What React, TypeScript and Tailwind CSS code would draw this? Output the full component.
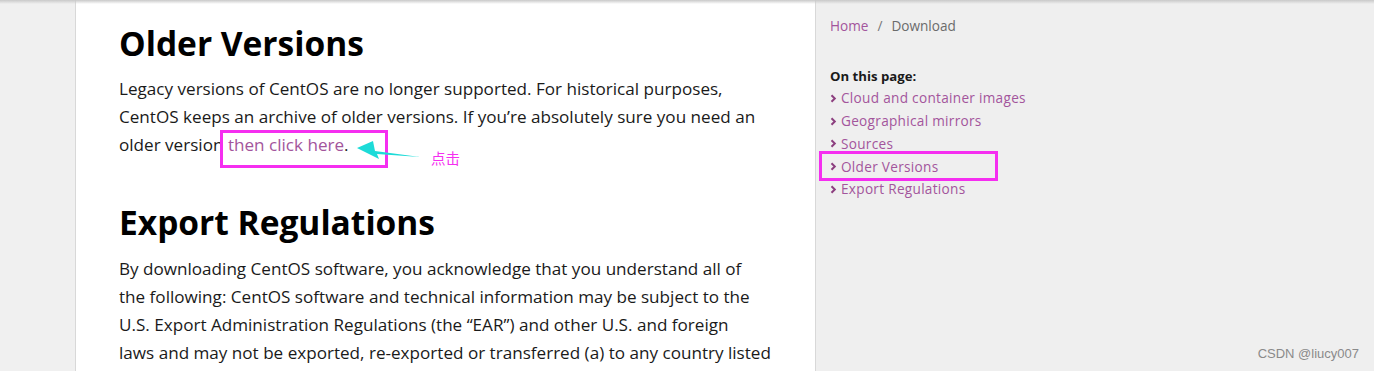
import React from 'react';

// Sidebar table of contents entries
const tocItems = [
  'Cloud and container images',
  'Geographical mirrors',
  'Sources',
  'Older Versions',
  'Export Regulations',
];

function Chevron() {
  return (
    <svg width="7" height="9" viewBox="0 0 7 9" className="shrink-0">
      <path d="M1.5 1.2 L4.8 4.5 L1.5 7.8" stroke="#8c3f7f" strokeWidth="2" fill="none" />
    </svg>
  );
}

export default function App() {
  return (
    <div
      className="relative flex h-[371px] w-[1374px] overflow-hidden bg-[#efefef] text-[#1a1a1a]"
      style={{ fontFamily: '"Open Sans", "Liberation Sans", sans-serif' }}
    >
      {/* top shadow */}
      <div className="absolute left-0 right-0 top-0 h-[4px] bg-gradient-to-b from-[#c9c9c9] to-transparent" />

      {/* left gutter */}
      <div className="w-[75px] shrink-0 bg-[#f0f0f0]" />

      {/* main content */}
      <main className="w-[741px] shrink-0 border-x border-[#d8d8d8] bg-white pl-[43px] pt-[20px]">
        <h2 className="text-[33.5px] font-bold leading-[46px] text-black">Older Versions</h2>
        <p className="mt-[9px] whitespace-nowrap text-[17.1px] leading-[28px]">
          Legacy versions of CentOS are no longer supported. For historical purposes,
          <br />
          CentOS keeps an archive of older versions. If you’re absolutely sure you need an
          <br />
          older version <span className="text-[#a3559c]">then click here</span>.
        </p>

        <h2 className="mt-[40px] text-[33.5px] font-bold leading-[46px] text-black">Export Regulations</h2>
        <p className="mt-[10px] whitespace-nowrap text-[17.1px] leading-[28px]">
          By downloading CentOS software, you acknowledge that you understand all of
          <br />
          the following: CentOS software and technical information may be subject to the
          <br />
          U.S. Export Administration Regulations (the “EAR”) and other U.S. and foreign
          <br />
          laws and may not be exported, re-exported or transferred (a) to any country listed
        </p>
      </main>

      {/* sidebar */}
      <aside className="flex-1 bg-[#efefef] pl-[14px] pt-[16px] text-[13.6px]">
        <div className="flex items-center gap-[9px] leading-[20px]">
          <span className="text-[#a3559c]">Home</span>
          <span className="text-[#777]">/</span>
          <span className="text-[#6b6b6b]">Download</span>
        </div>
        <div className="mt-[30px] text-[13.2px] font-bold leading-[20px] text-[#1a1a1a]">On this page:</div>
        <ul className="mt-[1px] flex flex-col">
          {tocItems.map((item) => (
            <li key={item} className="flex h-[22.8px] items-center gap-[4px] text-[#a3559c]">
              <Chevron />
              <span className="tracking-[0.3px]">{item}</span>
            </li>
          ))}
        </ul>
      </aside>

      {/* annotation: highlight boxes, arrow and label */}
      <div className="absolute left-[220px] top-[130px] h-[38px] w-[168px] border-[3px] border-[#f52ef0]" />
      <svg className="absolute left-[350px] top-[138px]" width="80" height="25" viewBox="350 138 80 25">
        <path d="M357 148 L373 141 L375 151 L420 157 L377 154 L379 159 Z" fill="#1ddbd8" />
      </svg>
      <span
        className="absolute left-[431px] top-[148px] text-[14.5px] leading-[20px] text-[#f52ef0]"
        style={{ fontFamily: '"Noto Sans CJK SC", sans-serif' }}
      >
        点击
      </span>
      <div className="absolute left-[819px] top-[151px] h-[30px] w-[179px] border-[3px] border-[#f52ef0]" />

      {/* watermark */}
      <span
        className="absolute right-[15px] top-[344px] text-[13px] text-[#8a8a8a]"
        style={{ fontFamily: '"Liberation Sans", sans-serif' }}
      >
        CSDN @liucy007
      </span>
    </div>
  );
}
